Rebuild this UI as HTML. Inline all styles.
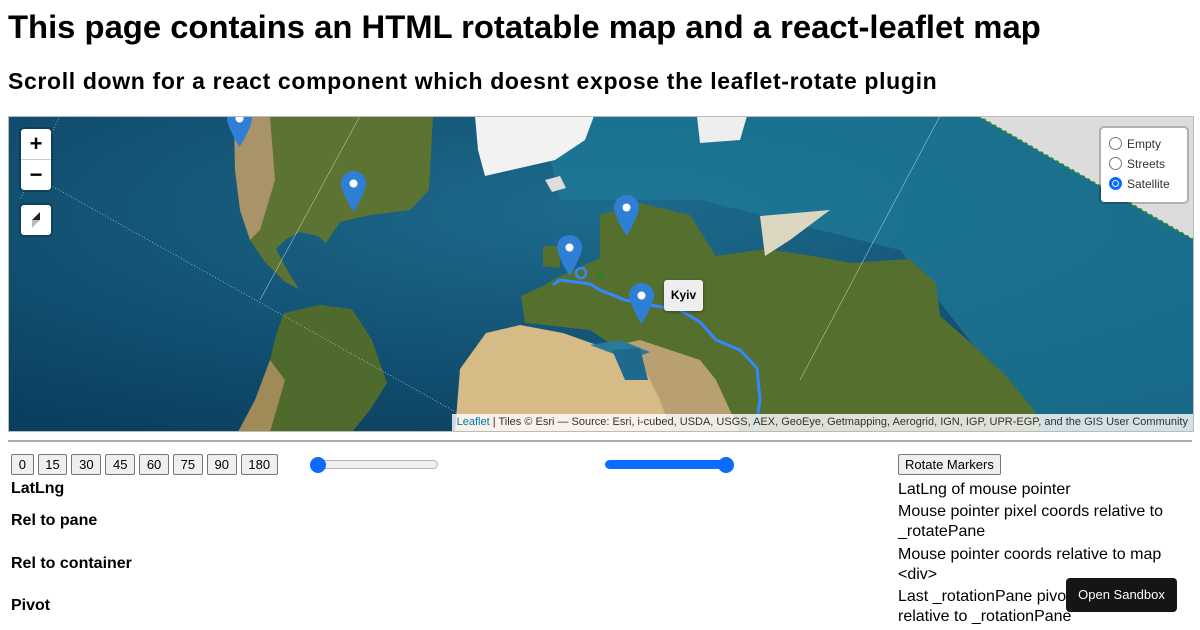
<!DOCTYPE html>
<html><head><meta charset="utf-8"><style>
*{box-sizing:border-box}
body{margin:0;width:1200px;height:630px;overflow:hidden;font-family:"Liberation Sans",Arial,sans-serif;background:#fff;color:#000;position:relative}
h1{position:absolute;left:8px;top:7px;margin:0;font-size:32.8px;font-weight:bold;line-height:40px;white-space:nowrap}
h2{position:absolute;left:8px;top:66px;margin:0;font-size:23px;letter-spacing:.65px;font-weight:bold;line-height:30px;white-space:nowrap}
#map{position:absolute;left:8px;top:116px;width:1186px;height:316px;border:1px solid #bbb;overflow:hidden;background:#0f4a6a}
.ctl{position:absolute;background:#fff;border-radius:3px;box-shadow:0 0 0 2px rgba(0,0,0,.2)}
.zb{width:30px;height:30px;line-height:30px;text-align:center;font-size:22px;font-weight:bold;color:#000}
.pin{position:absolute;width:25px;height:41px}
.attr{position:absolute;right:0;bottom:0;background:rgba(255,255,255,.8);font-size:11px;padding:1px 5px;color:#333;line-height:15px}
.btns{position:absolute;left:11px;top:454px}
.btns span{display:inline-block;border:1px solid #767676;background:#efefef;border-radius:2px;font-size:13px;padding:2px 6.7px;margin-right:4px;line-height:15px}
.lab{position:absolute;left:11px;font-weight:bold;font-size:16px}
.r{position:absolute;left:898px;font-size:16px;line-height:20px}
</style></head><body>
<h1>This page contains an HTML rotatable map and a react-leaflet map</h1>
<h2>Scroll down for a react component which doesnt expose the leaflet-rotate plugin</h2>
<div id="map">
<svg width="1186" height="316" viewBox="8 116 1186 316" style="position:absolute;left:-1px;top:-1px">
<defs><radialGradient id="oc" cx="0.5" cy="0.3" r="0.8"><stop offset="0" stop-color="#1d6b8c"/><stop offset="1" stop-color="#0b3f60"/></radialGradient></defs>
<rect x="8" y="116" width="1186" height="316" fill="url(#oc)"/>
<path d="M540 116 L980 116 L1194 240 L1194 432 L1040 432 L900 250 L700 200 L560 200 Z" fill="#1e7c98" opacity=".7"/>
<polygon points="978,116 1194,116 1194,240" fill="#dcdcdc"/>
<line x1="978" y1="116" x2="1194" y2="240" stroke="#2a8a20" stroke-width="2" stroke-dasharray="3,3"/>
<polygon points="234,116 433,116 429,190 410,210 370,215 340,222 326,243 318,236 300,232 285,240 276,249 290,275 299,289 285,282 265,262 250,240 240,210 235,170" fill="#5d7334"/>
<polygon points="234,116 270,116 275,180 260,230 250,240 240,210 235,170" fill="#a89468"/>
<polygon points="284,313 320,305 352,309 372,340 387,383 370,410 352,432 238,432 255,400 270,360 276,335" fill="#4e6a2c"/>
<polygon points="270,360 285,380 270,432 238,432 255,400" fill="#a08a58"/>
<polygon points="475,116 594,116 585,140 555,160 520,168 485,176 478,150" fill="#f2f2f2"/>
<polygon points="545,180 560,176 566,188 552,192" fill="#ddd"/>
<polygon points="521,296 545,285 556,278 600,258 600,215 640,203 690,215 716,256 766,249 813,256 851,263 909,259 936,283 940,316 971,343 1006,376 1033,409 1044,432 640,432 620,350 590,330 545,325 525,323" fill="#556f2f"/>
<polygon points="543,246 560,246 560,268 543,266" fill="#556f2f"/>
<polygon points="600,349 640,340 700,360 716,380 740,432 600,432" fill="#b9a073"/>
<polygon points="760,216 830,210 790,240 765,256" fill="#ddd6c0"/>
<polygon points="697,116 747,116 740,140 700,143" fill="#eee"/>
<polygon points="460,369 486,333 520,325 563,333 608,349 640,360 660,400 672,432 455,432" fill="#d6bb86"/>
<polygon points="590,345 620,340 650,352 630,360" fill="#2a7a9a"/>
<polygon points="612,350 640,348 648,380 625,380" fill="#1d6a8c"/>
<line x1="60" y1="116" x2="20" y2="200" stroke="#cde" stroke-width=".6" stroke-dasharray="1,2"/>
<line x1="50" y1="185" x2="470" y2="420" stroke="#cde" stroke-width=".6" stroke-dasharray="1,2"/>
<line x1="360" y1="116" x2="260" y2="300" stroke="#cde" stroke-width=".5"/>
<line x1="940" y1="116" x2="800" y2="380" stroke="#cde" stroke-width=".5"/>
<polyline points="553,285 560,280 590,284 600,290 625,300 650,305 680,310 700,322 716,340 740,350 757,368 760,400 755,432" fill="none" stroke="#3388ff" stroke-width="3"/>
<circle cx="581" cy="273" r="5" fill="none" stroke="#3388ff" stroke-width="2.5"/>
<circle cx="600" cy="276" r="2.5" fill="#1a8a1a"/>
</svg>
<div class="ctl" style="left:12px;top:12px;width:30px;height:61px"><div class="zb" style="border-bottom:1px solid #ccc;height:31px">+</div><div class="zb">−</div></div>
<div class="ctl" style="left:12px;top:88px;width:30px;height:30px"><svg width="30" height="30"><polygon points="19,7 19,15 11,15" fill="#222"/><polygon points="11,15 19,15 11,23" fill="#bbb"/></svg></div>
<div class="ctl" style="right:6px;top:11px;width:86px;height:74px;font-size:12px;color:#333;padding:6px 8px">
<div style="line-height:20px"><span style="display:inline-block;width:13px;height:13px;border:1px solid #777;border-radius:50%;vertical-align:-2px;margin-right:5px"></span>Empty</div>
<div style="line-height:20px"><span style="display:inline-block;width:13px;height:13px;border:1px solid #777;border-radius:50%;vertical-align:-2px;margin-right:5px"></span>Streets</div>
<div style="line-height:20px"><span style="display:inline-block;width:13px;height:13px;border:3px solid #0a6cff;border-radius:50%;vertical-align:-2px;margin-right:5px;box-shadow:inset 0 0 0 1px #fff;background:#0a6cff"></span>Satellite</div>
</div>
<svg class="pin" style="left:218px;top:-11px" viewBox="0 0 25 41"><path d="M12.5 0C5.6 0 0 5.6 0 12.5 0 21 12.5 41 12.5 41S25 21 25 12.5C25 5.6 19.4 0 12.5 0z" fill="#2f7fd4"/><circle cx="12.5" cy="12.5" r="4" fill="#fff"/></svg>
<svg class="pin" style="left:332px;top:54px" viewBox="0 0 25 41"><path d="M12.5 0C5.6 0 0 5.6 0 12.5 0 21 12.5 41 12.5 41S25 21 25 12.5C25 5.6 19.4 0 12.5 0z" fill="#2f7fd4"/><circle cx="12.5" cy="12.5" r="4" fill="#fff"/></svg>
<svg class="pin" style="left:548px;top:118px" viewBox="0 0 25 41"><path d="M12.5 0C5.6 0 0 5.6 0 12.5 0 21 12.5 41 12.5 41S25 21 25 12.5C25 5.6 19.4 0 12.5 0z" fill="#2f7fd4"/><circle cx="12.5" cy="12.5" r="4" fill="#fff"/></svg>
<svg class="pin" style="left:605px;top:78px" viewBox="0 0 25 41"><path d="M12.5 0C5.6 0 0 5.6 0 12.5 0 21 12.5 41 12.5 41S25 21 25 12.5C25 5.6 19.4 0 12.5 0z" fill="#2f7fd4"/><circle cx="12.5" cy="12.5" r="4" fill="#fff"/></svg>
<svg class="pin" style="left:620px;top:166px" viewBox="0 0 25 41"><path d="M12.5 0C5.6 0 0 5.6 0 12.5 0 21 12.5 41 12.5 41S25 21 25 12.5C25 5.6 19.4 0 12.5 0z" fill="#2f7fd4"/><circle cx="12.5" cy="12.5" r="4" fill="#fff"/></svg>
<div style="position:absolute;left:655px;top:163px;width:39px;height:31px;background:#eee;border-radius:3px;font-size:12px;font-weight:bold;line-height:31px;text-align:center;box-shadow:0 1px 3px rgba(0,0,0,.4)">Kyiv</div>
<div class="attr"><span style="color:#0078a8">Leaflet</span> | Tiles © Esri — Source: Esri, i-cubed, USDA, USGS, AEX, GeoEye, Getmapping, Aerogrid, IGN, IGP, UPR-EGP, and the GIS User Community</div>
</div>
<div style="position:absolute;left:8px;top:440px;width:1184px;border-top:2px solid #aaa"></div>
<div class="btns"><span>0</span><span>15</span><span>30</span><span>45</span><span>60</span><span>75</span><span>90</span><span>180</span></div>
<div style="position:absolute;left:310px;top:460px;width:128px;height:9px;border:1px solid #b2b2b2;border-radius:5px;background:#efefef"></div>
<div style="position:absolute;left:310px;top:457px;width:16px;height:16px;border-radius:50%;background:#0a6cff"></div>
<div style="position:absolute;left:605px;top:460px;width:128px;height:9px;border-radius:5px;background:#0a6cff"></div>
<div style="position:absolute;left:718px;top:457px;width:16px;height:16px;border-radius:50%;background:#0a6cff"></div>
<div style="position:absolute;left:898px;top:454px;border:1px solid #767676;background:#efefef;border-radius:2px;font-size:13px;padding:2px 6px;line-height:15px">Rotate Markers</div>
<div class="lab" style="top:480px">LatLng</div>
<div class="lab" style="top:512px">Rel to pane</div>
<div class="lab" style="top:555px">Rel to container</div>
<div class="lab" style="top:597px">Pivot</div>
<div class="r" style="top:480px">LatLng of mouse pointer</div>
<div class="r" style="top:502px">Mouse pointer pixel coords relative to<br>_rotatePane</div>
<div class="r" style="top:545px">Mouse pointer coords relative to map<br>&lt;div&gt;</div>
<div class="r" style="top:587px">Last _rotationPane pivot<br>relative to _rotationPane</div>
<div style="position:absolute;left:1066px;top:578px;width:111px;height:34px;background:#151515;color:#fff;border-radius:4px;font-size:13px;line-height:34px;text-align:center">Open Sandbox</div>
</body></html>
